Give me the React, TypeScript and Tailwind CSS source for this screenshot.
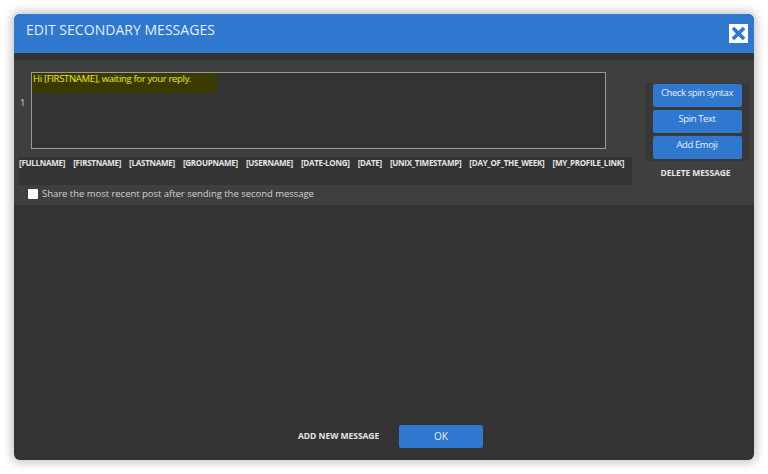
import React from "react";

const tags = ["[FULLNAME]","[FIRSTNAME]","[LASTNAME]","[GROUPNAME]","[USERNAME]","[DATE-LONG]","[DATE]","[UNIX_TIMESTAMP]","[DAY_OF_THE_WEEK]","[MY_PROFILE_LINK]"];

function Btn({ children }: { children: React.ReactNode }) {
  return (
    <div className="h-[23px] w-[89px] rounded-[2px] bg-[#2f77cf] flex items-center justify-center text-[9.5px] tracking-[-0.4px] text-[#e8f0fa] pb-[4px]">
      {children}
    </div>
  );
}

export default function App() {
  return (
    <div className="w-[768px] h-[474px] bg-white pt-[14px] pl-[14px] overflow-hidden font-['Open_Sans',sans-serif]">
      <div className="w-[740px] h-[446px] rounded-[6px] overflow-hidden bg-[#333333] flex flex-col shadow-[0_0_10px_3px_rgba(0,0,0,0.22)]">
        <div className="h-[39px] shrink-0 bg-[#2f77cf] flex items-start justify-between pl-[12px] pr-[6px]">
          <div className="text-[14px] leading-[20px] mt-[6px] text-[#e6eef9] tracking-[0.03px]">EDIT SECONDARY MESSAGES</div>
          <div className="w-[19px] h-[19px] mt-[10px] bg-white flex items-center justify-center">
            <svg width="15" height="15" viewBox="0 0 15 15">
              <path d="M3.2 3.2 L11.8 11.8 M11.8 3.2 L3.2 11.8" stroke="#2f77cf" strokeWidth="3.6" strokeLinecap="square" />
            </svg>
          </div>
        </div>
        <div className="mt-[7px] h-[145px] shrink-0 bg-[#3f3f3f] flex">
          <div className="w-[618px] shrink-0">
            <div className="flex mt-[12px]">
              <div className="w-[16px] pl-[6px] pt-[24px] text-[9px] leading-[14px] text-[#dddddd]">1</div>
              <div className="ml-[0.5px] w-[575.5px] h-[77px] border border-[#9a9a9a] bg-[#333333]">
                <div className="w-[185px] h-[20px] bg-[#3a3a00] text-[#eeee00] text-[9.5px] leading-[12px] pl-[1.5px] tracking-[-0.32px]">
                  Hi [FIRSTNAME], waiting for your reply.
                </div>
              </div>
            </div>
            <div className="ml-[5px] mt-[8px] w-[613px] h-[28px] bg-[#333333] flex gap-[8px] text-[8px] font-bold leading-[10px] pt-[1px] text-[#e6e6e6] tracking-[-0.26px]">
              {tags.map((t) => (
                <span key={t}>{t}</span>
              ))}
            </div>
            <div className="flex items-center ml-[14px] mt-[2px] gap-[4px]">
              <div className="w-[10px] h-[10px] bg-white rounded-[1px]" />
              <span className="text-[9.5px] leading-[14px] text-[#d2d2d2] tracking-[-0.03px]">Share the most recent post after sending the second message</span>
            </div>
          </div>
          <div className="ml-[13px] mt-[23px] w-[104px] flex flex-col items-center">
            <div className="w-[104px] h-[78px] bg-[#383838] flex flex-col items-center gap-[3px] pt-[1px]">
              <Btn>Check spin syntax</Btn>
              <Btn>Spin Text</Btn>
              <Btn>Add Emoji</Btn>
            </div>
            <div className="mt-[6px] pr-[3px] text-[8.5px] font-bold leading-[12px] text-[#e6e6e6] tracking-[-0.1px]">DELETE MESSAGE</div>
          </div>
        </div>
        <div className="flex-1" />
        <div className="h-[35px] shrink-0 flex items-start">
          <div className="ml-[284px] w-[85px] text-[8.5px] font-bold leading-[22px] text-[#e6e6e6] tracking-[-0.03px] whitespace-nowrap">ADD NEW MESSAGE</div>
          <div className="ml-[16px] w-[84px] h-[23px] rounded-[2px] bg-[#2f77cf] flex items-center justify-center text-[10px] text-[#e8f0fa]">OK</div>
        </div>
      </div>
    </div>
  );
}
